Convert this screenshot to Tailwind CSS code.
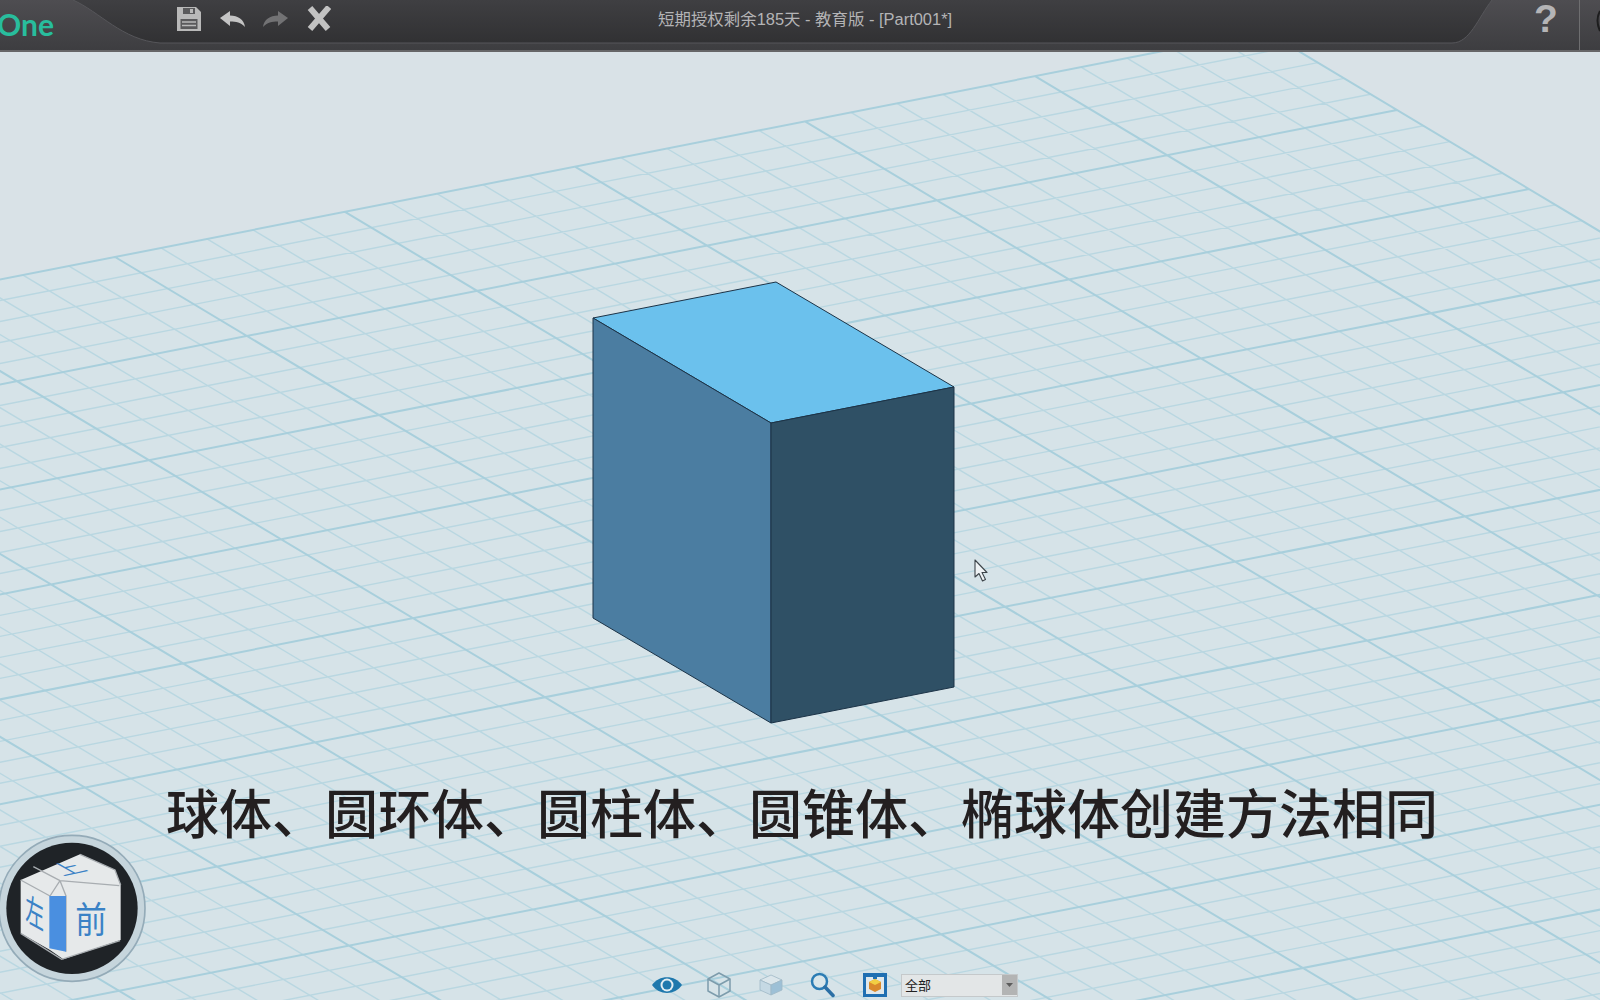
<!DOCTYPE html>
<html lang="zh-CN">
<head>
<meta charset="utf-8">
<title>Part001</title>
<script src="https://cdn.jsdelivr.net/npm/@tailwindcss/browser@4"></script>
</head>
<body class="m-0 overflow-hidden bg-[#d9e2e7]">
<div class="flex h-[1000px] w-[1600px] flex-col overflow-hidden font-['Noto_Sans_CJK_SC',sans-serif]">

  <!-- title bar -->
  <header class="relative h-[52px] shrink-0 overflow-hidden bg-gradient-to-b from-[#3f3f42] to-[#2e2e30]">
    <svg class="absolute inset-0" width="1600" height="52" viewBox="0 0 1600 52" fill="none">
      <defs>
        <linearGradient id="wedge" x1="0" y1="0" x2="0" y2="1">
          <stop offset="0" stop-color="#4e4d51"/>
          <stop offset="1" stop-color="#3d3d40"/>
        </linearGradient>
      </defs>
      <path d="M0 0H73C100 12 122 40 160 43H1452C1470 43 1478 18 1492 0H1600V51H0Z" fill="url(#wedge)"/>
      <path d="M73 0C100 12 122 40 160 43H1452C1470 43 1478 18 1492 0" stroke="#56565a" stroke-width="1"/>
      <path d="M0 51H1600" stroke="#666668" stroke-width="2"/>
      <path d="M1579.5 0V50" stroke="#6e6e70" stroke-width="1"/>
      <path d="M1600 11Q1595 20 1600 31" stroke="#1d1d1e" stroke-width="2"/>
    </svg>
    <div class="relative flex h-[52px] items-start">
      <span class="ml-[-3px] mt-[8px] w-[180px] font-['Lato',sans-serif] text-[30px] font-bold leading-[32px] text-[#28bd9d]">One</span>
      <svg class="mt-[7px]" width="24" height="24" viewBox="0 0 24 24">
        <path d="M0 0H19L24 5V24H0Z" fill="#b9b9b9"/>
        <rect x="6" y="1" width="12" height="6" fill="#5a5a5c"/>
        <rect x="13" y="2" width="3" height="4" fill="#b9b9b9"/>
        <rect x="3.500" y="12" width="17" height="10" fill="#5a5a5c"/>
        <path d="M5 15H19M5 18.500H19" stroke="#b9b9b9" stroke-width="1.400"/>
      </svg>
      <svg class="ml-[19px] mt-[11px]" width="25" height="16" viewBox="0 0 25 16">
        <path d="M0 7L10 0V4.500C18 4.500 24 8.500 25 16C21 11.500 16 10.500 10 10.500V15Z" fill="#c4c4c4"/>
      </svg>
      <svg class="ml-[18px] mt-[11px]" width="25" height="16" viewBox="0 0 25 16">
        <path d="M25 7L15 0V4.500C7 4.500 1 8.500 0 16C4 11.500 9 10.500 15 10.500V15Z" fill="#727274"/>
      </svg>
      <svg class="ml-[19px] mt-[6px]" width="24" height="25" viewBox="0 0 24 25">
        <path d="M3 2L21 23M22 1L3 23" stroke="#c2c2c2" stroke-width="6"/>
      </svg>
      <span class="ml-[327px] mt-[5px] whitespace-nowrap font-['Liberation_Sans','Noto_Sans_CJK_SC',sans-serif] text-[16.45px] leading-[28px] text-[#b4b4b6]">短期授权剩余185天 - 教育版 - [Part001*]</span>
      <span class="absolute left-[1534px] top-[0px] font-['Liberation_Sans',sans-serif] text-[39px] font-bold leading-[38px] text-[#b4b4b6]">?</span>
    </div>
  </header>

  <!-- 3D viewport -->
  <main class="relative flex-1 overflow-hidden bg-[#d9e2e7]">
    <svg class="absolute inset-0 blur-[0.4px]" width="1600" height="948" viewBox="0 52 1600 948" fill="none">
      <g transform="matrix(230 -45.2 132 79 115 257)">
        <path d="M-6 0H5V12H-6Z" fill="#d6e3e8"/>
        <path vector-effect="non-scaling-stroke" stroke="#b9d7e1" stroke-width="1.400"
          d="M-5.800 0V12M-5.600 0V12M-5.400 0V12M-5.200 0V12M-4.800 0V12M-4.600 0V12M-4.400 0V12M-4.200 0V12M-3.800 0V12M-3.600 0V12M-3.400 0V12M-3.200 0V12M-2.800 0V12M-2.600 0V12M-2.400 0V12M-2.200 0V12M-1.800 0V12M-1.600 0V12M-1.400 0V12M-1.200 0V12M-.8 0V12M-.6 0V12M-.4 0V12M-.2 0V12M.2 0V12M.4 0V12M.6 0V12M.8 0V12M1.200 0V12M1.400 0V12M1.600 0V12M1.800 0V12M2.200 0V12M2.400 0V12M2.600 0V12M2.800 0V12M3.200 0V12M3.400 0V12M3.600 0V12M3.800 0V12M4.200 0V12M4.400 0V12M4.600 0V12M4.800 0V12
             M-6 .2H5M-6 .4H5M-6 .6H5M-6 .8H5M-6 1.200H5M-6 1.400H5M-6 1.600H5M-6 1.800H5M-6 2.200H5M-6 2.400H5M-6 2.600H5M-6 2.800H5M-6 3.200H5M-6 3.400H5M-6 3.600H5M-6 3.800H5M-6 4.200H5M-6 4.400H5M-6 4.600H5M-6 4.800H5M-6 5.200H5M-6 5.400H5M-6 5.600H5M-6 5.800H5M-6 6.200H5M-6 6.400H5M-6 6.600H5M-6 6.800H5M-6 7.200H5M-6 7.400H5M-6 7.600H5M-6 7.800H5M-6 8.200H5M-6 8.400H5M-6 8.600H5M-6 8.800H5M-6 9.200H5M-6 9.400H5M-6 9.600H5M-6 9.800H5M-6 10.200H5M-6 10.400H5M-6 10.600H5M-6 10.800H5"/>
        <path vector-effect="non-scaling-stroke" stroke="#a8cfdc" stroke-width="2"
          d="M-6 0V12M-5 0V12M-4 0V12M-3 0V12M-2 0V12M-1 0V12M0 0V12M1 0V12M2 0V12M3 0V12M4 0V12M5 0V12
             M-6 0H5M-6 1H5M-6 2H5M-6 3H5M-6 4H5M-6 5H5M-6 6H5M-6 7H5M-6 8H5M-6 9H5M-6 10H5M-6 11H5"/>
      </g>
      <!-- solid block -->
      <g stroke="#1c3347" stroke-width="1" stroke-linejoin="round">
        <polygon points="593,318 776,282 954,387 771,423" fill="#6bc1ed"/>
        <polygon points="593,318 771,423 771,723 593,618" fill="#4b7da1"/>
        <polygon points="771,423 954,387 954,687 771,723" fill="#2f5065"/>
      </g>
      <!-- pointer -->
      <path d="M975 560V577L979 573.500L982.500 581L985.500 579.500L982 572.500H987Z" fill="#eef2f4" stroke="#3d4449" stroke-width="1.100" stroke-linejoin="round"/>
    </svg>

    <!-- caption -->
    <p class="absolute left-[166px] top-[732px] whitespace-nowrap text-[53px] font-medium leading-[54px] text-[#231f20]">球体、圆环体、圆柱体、圆锥体、椭球体创建方法相同</p>

    <!-- view cube -->
    <svg class="absolute left-0 top-[768px]" width="170" height="170" viewBox="0 0 510 510" fill="none">
      <circle cx="216" cy="265" r="219" fill="#c6d5dc" stroke="#94abb8" stroke-width="5"/>
      <circle cx="216" cy="265" r="197" fill="#1f2327"/>
      <path d="M240 103L345 150L362 195V360L190 418L150 390L62 340V180Z" fill="#e6e9ea"/>
      <path d="M62 180L150 228M180 182L150 228M180 182L198 228V395M180 182L358 197M240 103L345 150L362 195M62 340L185 418L360 362M100 140L180 182" stroke="#a8adb1" stroke-width="4"/>
      <path d="M148 228H198V395L148 385Z" fill="#4a8fe0"/>
      <text x="0" y="0" transform="translate(226 338) scale(1.05 1.2)" font-size="90" fill="#3a82c6">前</text>
      <text x="0" y="0" transform="matrix(.66 .36 0 1.18 76 300)" font-size="85" fill="#3a82c6">左</text>
      <text x="0" y="0" transform="matrix(.92 -.2 .75 .42 188 168)" font-size="85" fill="#3a82c6">上</text>
    </svg>

    <!-- bottom view toolbar -->
    <div class="absolute bottom-[2px] left-[652px] flex h-[26px] items-center">
      <svg width="30" height="18" viewBox="0 0 30 18">
        <path d="M0 9C7 -1.500 23 -1.500 30 9C23 19.500 7 19.500 0 9Z" fill="#1f78ad"/>
        <circle cx="15" cy="9" r="6.500" fill="#e3edf2"/>
        <circle cx="15" cy="9" r="4.500" fill="#1f78ad"/>
      </svg>
      <svg class="ml-[25px]" width="24" height="26" viewBox="0 0 24 26" fill="none" stroke="#7d9cac" stroke-width="1.500" stroke-linejoin="round">
        <path d="M12 1L23 7V19L12 25L1 19V7Z"/>
        <path d="M1 7L12 13L23 7M12 13V25"/>
      </svg>
      <svg class="ml-[28px]" width="24" height="22" viewBox="0 0 24 22" stroke="#9fb9c7" stroke-width=".8" stroke-linejoin="round">
        <path d="M12 1L23 6L12 11L1 6Z" fill="#dbe6eb"/>
        <path d="M1 6L12 11V21L1 16Z" fill="#c5d9e4"/>
        <path d="M12 11L23 6V16L12 21Z" fill="#9dc0d6"/>
      </svg>
      <svg class="ml-[27px]" width="25" height="26" viewBox="0 0 25 26" fill="none">
        <circle cx="9.500" cy="9.500" r="7.500" fill="#d9e6ea" stroke="#2b7cb4" stroke-width="2.500"/>
        <path d="M15 15L23 23.500" stroke="#2b6fa5" stroke-width="3.500" stroke-linecap="round"/>
      </svg>
      <svg class="ml-[28px]" width="24" height="24" viewBox="0 0 24 24">
        <rect width="24" height="24" fill="#1f6fb2"/>
        <rect x="3" y="4" width="18" height="17" fill="#dfe8ec"/>
        <rect x="10" y="1" width="4" height="5" fill="#1f6fb2"/>
        <path d="M12 6L18 9V16L12 19L6 16V9Z" fill="#d9892c"/>
        <path d="M12 6L18 9L12 12L6 9Z" fill="#f2cf43"/>
      </svg>
      <div class="ml-[14px] flex h-[23px] w-[117px] items-center border border-[#c5c9cb] bg-[#e3e6e7] pl-[3px] pb-[1px] text-[13px] leading-none text-[#222]">
        <span class="flex-1">全部</span>
        <span class="flex h-full w-[15px] items-center justify-center bg-[#b3b4b4]">
          <svg width="7" height="4" viewBox="0 0 7 4"><path d="M0 0H7L3.500 4Z" fill="#5c5c5c"/></svg>
        </span>
      </div>
    </div>
  </main>
</div>
</body>
</html>
